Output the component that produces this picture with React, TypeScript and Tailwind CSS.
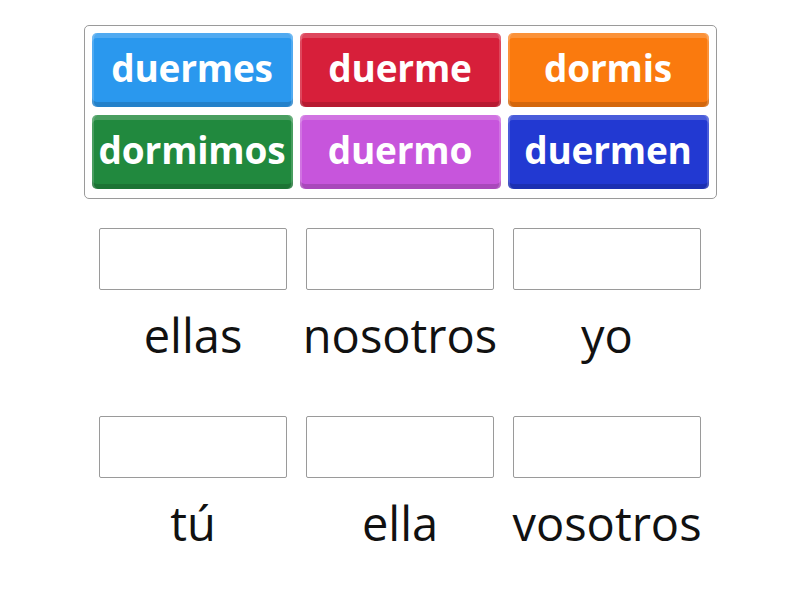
const tiles = [
  { word: "duermes", face: "bg-[#2a98ee]" },
  { word: "duerme", face: "bg-[#d71f3a]" },
  { word: "dormis", face: "bg-[#fa7a0e]" },
  { word: "dormimos", face: "bg-[#21893e]" },
  { word: "duermo", face: "bg-[#c755dc]" },
  { word: "duermen", face: "bg-[#2239d2]" },
];

const targets = ["ellas", "nosotros", "yo", "tú", "ella", "vosotros"];

export default function App() {
  return (
    <div className="w-[800px] h-[600px] bg-white font-['Open_Sans',sans-serif] pt-[25px]">
      <div className="mx-auto w-[633px] rounded-[5px] border border-[#9a9a9a] px-[7px] pt-[7px] pb-[9px]">
        <div className="grid grid-cols-3 gap-x-[7px] gap-y-[8px]">
          {tiles.map((t) => (
            <div
              key={t.word}
              className={`${t.face} h-[74px] rounded-[5px] flex items-center justify-center text-white font-bold text-[37px] tracking-[-0.2px] shadow-[inset_0_5px_0_rgba(255,255,255,0.18),inset_2px_0_0_rgba(255,255,255,0.18),inset_-2px_0_0_rgba(255,255,255,0.18),inset_0_-5px_0_rgba(0,0,0,0.15)]`}
            >
              <span className="leading-none -mt-[5px]">{t.word}</span>
            </div>
          ))}
        </div>
      </div>

      <div className="mx-auto mt-[29px] w-[602px] grid grid-cols-3 gap-x-[19px] gap-y-[49px]">
        {targets.map((label) => (
          <div key={label} className="flex flex-col items-center">
            <div className="w-full h-[62px] border border-[#9a9a9a] rounded-[2px] bg-white" />
            <div className="mt-[13px] leading-[64px] h-[64px] text-[47px] text-[#111]">
              {label}
            </div>
          </div>
        ))}
      </div>
    </div>
  );
}
